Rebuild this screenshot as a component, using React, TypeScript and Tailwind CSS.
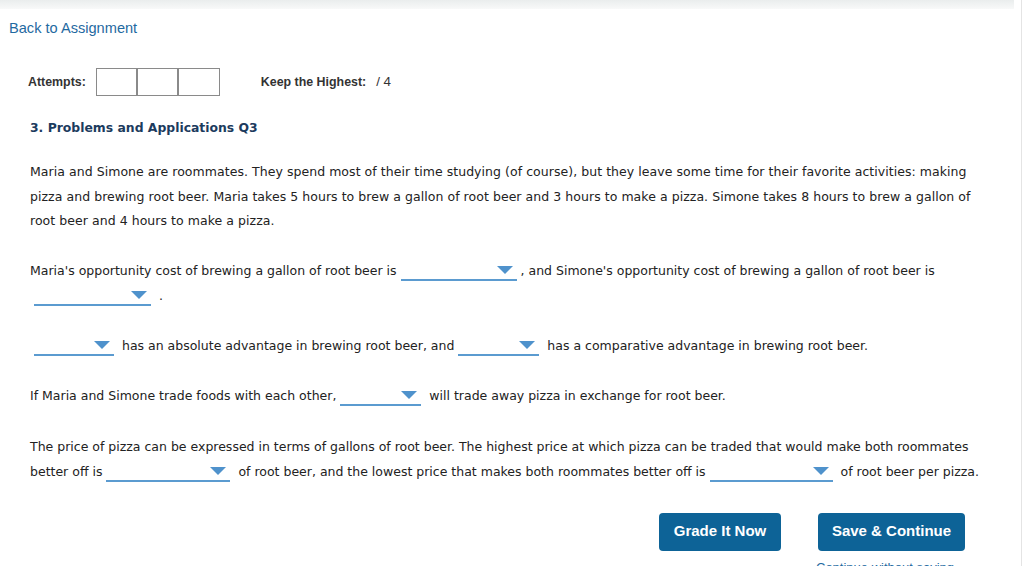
import React from 'react';

const body = { fontFamily: '"DejaVu Sans", Verdana, sans-serif' };
const arial = { fontFamily: '"Liberation Sans", Arial, sans-serif' };

// dropdown blank: underline with a small triangle at its right end
function Blank({ width }: { width: number }) {
    return (
        <span
            className="inline-block h-[15px] border-b-2 border-[#5b9bd0] align-[-6px] mx-[4px]"
            style={{ width }}
        >
            <svg width="16" height="8" viewBox="0 0 16 8" className="block ml-auto mr-[4px]">
                <path d="M0 0 L16 0 L8 8 Z" fill="#4f92cc" />
            </svg>
        </span>
    );
}

export default function App() {
    return (
        <div className="relative w-[1024px] h-[566px] overflow-hidden bg-white text-[#222]">
            <div className="h-[9px] w-[1014px] bg-gradient-to-b from-[#eaeded] to-[#f8f9f9]" />
            <div className="absolute right-[2px] top-0 h-full w-px bg-[#e4e4e4]" />

            <div className="ml-[9px] mt-[10px] text-[14.6px] leading-[18px] text-[#1f6aa1]" style={arial}>
                Back to Assignment
            </div>

            <div className="ml-[28px] mt-[31px] flex items-center text-[12.4px] font-bold text-[#333]" style={arial}>
                <span>Attempts:</span>
                <div className="ml-[10px] flex h-[28px] border border-[#8a8a8a]">
                    <div className="w-[41px] border-r-2 border-[#8a8a8a]" />
                    <div className="w-[41px] border-r-2 border-[#8a8a8a]" />
                    <div className="w-[40px]" />
                </div>
                <span className="ml-[41px]">Keep the Highest:</span>
                <span className="ml-[10px] text-[13.4px] font-normal">/ 4</span>
            </div>

            <div className="ml-[30px] mt-[23px] text-[12.4px] font-bold leading-[18px] text-[#1c3b5e]" style={body}>
                3. Problems and Applications Q3
            </div>

            <div className="ml-[30px] w-[960px] text-[12.5px] leading-[24.5px] text-[#222]" style={body}>
                <p className="mt-[23px] tracking-[0.05px]">
                    Maria and Simone are roommates. They spend most of their time studying (of course), but they leave some time for their favorite activities: making pizza and brewing root beer. Maria takes 5 hours to brew a gallon of root beer and 3 hours to make a pizza. Simone takes 8 hours to brew a gallon of root beer and 4 hours to make a pizza.
                </p>

                <p className="mt-[25.5px]">
                    Maria's opportunity cost of brewing a gallon of root beer is<Blank width={116} />, and Simone's opportunity cost of brewing a gallon of root beer is <Blank width={117} /> .
                </p>

                <p className="mt-[25.5px]">
                    <Blank width={80} /> has an absolute advantage in brewing root beer, and<Blank width={81} /> has a comparative advantage in brewing root beer.
                </p>

                <p className="mt-[25.5px]">
                    If Maria and Simone trade foods with each other,<Blank width={81} /> will trade away pizza in exchange for root beer.
                </p>

                <p className="mt-[25.5px] leading-[25.5px]">
                    The price of pizza can be expressed in terms of gallons of root beer. The highest price at which pizza can be traded that would make both roommates better off is<Blank width={124} /> of root beer, and the lowest price that makes both roommates better off is<Blank width={123} /> of root beer per pizza.
                </p>
            </div>

            <div className="mt-[28px] flex pl-[659px] gap-[37px]" style={arial}>
                <button className="h-[38px] w-[122px] rounded-[4px] bg-[#0d6397] text-[15px] font-bold text-white">
                    Grade It Now
                </button>
                <div className="flex flex-col items-start">
                    <button className="h-[38px] w-[147px] rounded-[4px] bg-[#0d6397] text-[15px] font-bold text-white">
                        Save &amp; Continue
                    </button>
                    <span className="ml-[-2px] mt-[9px] text-[13px] leading-[16px] text-[#1f6aa1]">
                        Continue without saving
                    </span>
                </div>
            </div>
        </div>
    );
}
